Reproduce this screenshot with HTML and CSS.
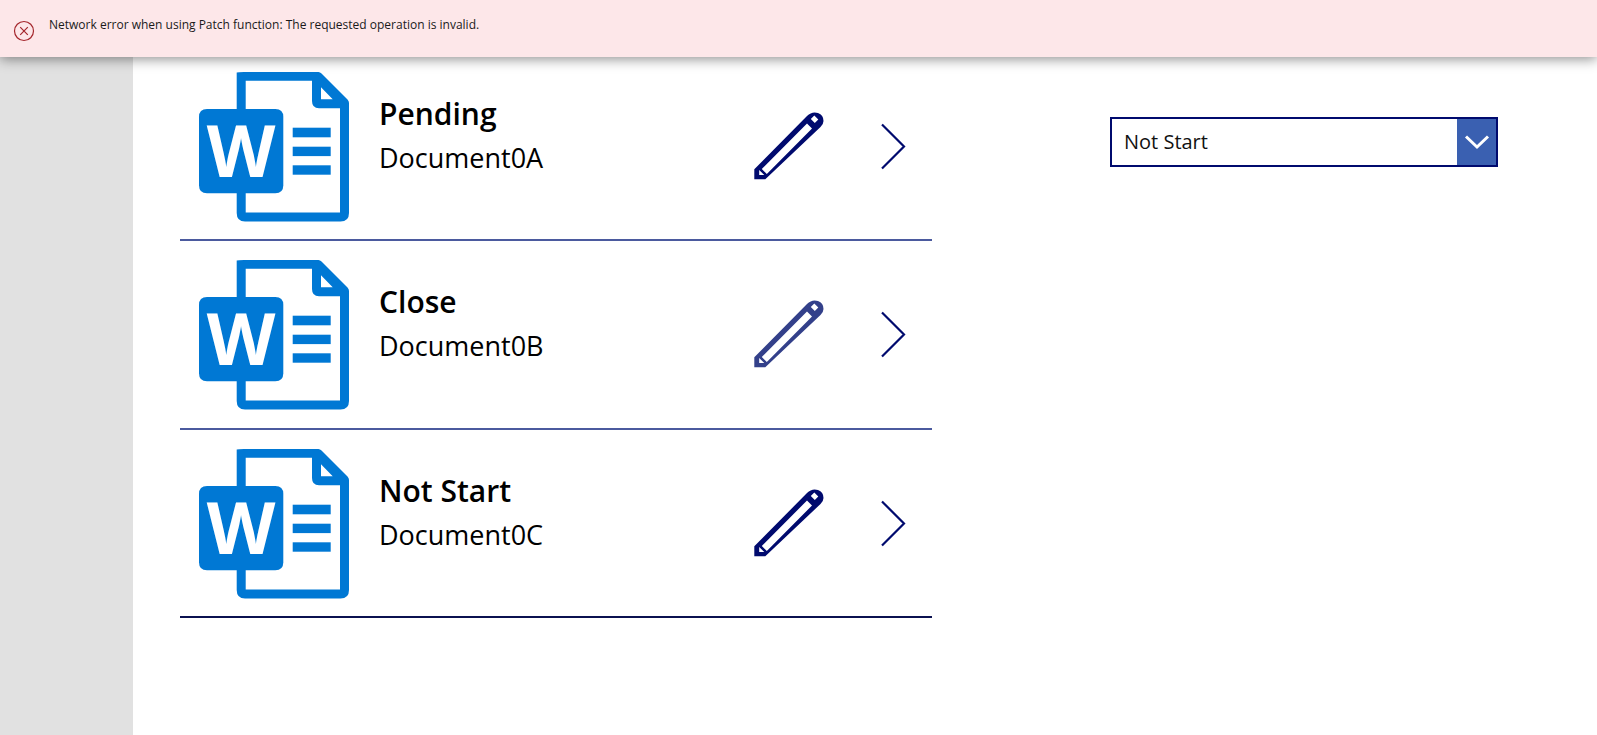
FILE: index.html
```html
<!DOCTYPE html>
<html lang="en">
<head>
<meta charset="utf-8">
<title>Documents</title>
<link rel="stylesheet" href="styles.css">
</head>
<body>
<div class="banner">
  <svg class="banner-icon" width="22" height="22" viewBox="0 0 22 22"><circle cx="11" cy="11" r="9.5"/><path d="M7.2 7.2l7.6 7.6M14.8 7.2l-7.6 7.6"/></svg>
  <span class="banner-text">Network error when using Patch function: The requested operation is invalid.</span>
</div>
<svg class="defs" width="0" height="0" aria-hidden="true">
  <defs>
    <g id="word">
      <path fill-rule="evenodd" d="M45 0H119.5Q121 0 122.500 1.500L148.500 27.500Q150 29 150 31V141Q150 149.500 141.500 149.500H46Q37.700 149.500 37.700 141V0.500Q39 0 45 0ZM46.700 8.700V140.500H141V36.300H120Q113 36.300 113 29V8.700ZM122 15.300V27.300H133.700Z"/>
      <path d="M8 37H76.300Q84.300 37 84.300 45V113.300Q84.300 121.300 76.300 121.300H8Q0 121.300 0 113.300V45Q0 37 8 37Z"/>
      <rect x="93.700" y="55.700" width="38" height="9.600"/>
      <rect x="93.700" y="74.700" width="38" height="9.400"/>
      <rect x="93.700" y="93.300" width="38" height="9.400"/>
      <text class="word-w" x="42" y="104.500" text-anchor="middle">W</text>
    </g>
    <g id="pencil">
      <path fill-rule="evenodd" d="M2.300 59.300L55 6Q60 1 66 3Q71.500 5 71.500 11Q71.500 14 68.500 17L13.300 69.300H2.300ZM13.300 55.500L9.800 59L14.800 64L18.300 60.500L60 18.500L55 13.500ZM62.300 5.500L58.800 9L62.800 13L66.300 9.500ZM7.200 60V65H12.300Z"/>
    </g>
  </defs>
</svg>
<div class="screen">
  <aside class="gutter"></aside>
  <main class="content">
    <ul class="list">
      <li class="row">
        <svg class="word" width="150" height="150" viewBox="0 0 150 150"><use href="#word"/></svg>
        <div class="texts"><div class="status">Pending</div><div class="doc">Document0A</div></div>
        <svg class="pencil" width="72" height="72" viewBox="0 0 72 72"><use href="#pencil"/></svg>
        <svg class="chevron" width="26" height="48" viewBox="0 0 26 48"><path d="M2 1.500L24 23.500L2 45.500"/></svg>
      </li>
      <li class="row row-hover">
        <svg class="word" width="150" height="150" viewBox="0 0 150 150"><use href="#word"/></svg>
        <div class="texts"><div class="status">Close</div><div class="doc">Document0B</div></div>
        <svg class="pencil" width="72" height="72" viewBox="0 0 72 72"><use href="#pencil"/></svg>
        <svg class="chevron" width="26" height="48" viewBox="0 0 26 48"><path d="M2 1.500L24 23.500L2 45.500"/></svg>
      </li>
      <li class="row row-last">
        <svg class="word" width="150" height="150" viewBox="0 0 150 150"><use href="#word"/></svg>
        <div class="texts"><div class="status">Not Start</div><div class="doc">Document0C</div></div>
        <svg class="pencil" width="72" height="72" viewBox="0 0 72 72"><use href="#pencil"/></svg>
        <svg class="chevron" width="26" height="48" viewBox="0 0 26 48"><path d="M2 1.500L24 23.500L2 45.500"/></svg>
      </li>
    </ul>
    <div class="dropdown">
      <span class="dropdown-value">Not Start</span>
      <span class="dropdown-button"><svg width="26" height="16" viewBox="0 0 26 16"><path d="M2 2.500L13 13L24 2.500"/></svg></span>
    </div>
  </main>
</div>
</body>
</html>
```
FILE: styles.css
```css
* { box-sizing: border-box; }
html, body { margin: 0; height: 100%; overflow: hidden; background: #fff; }
body { font-family: "Open Sans", "Liberation Sans", sans-serif; color: #000; position: relative; }
.defs { position: absolute; }

.banner {
  position: absolute; top: 0; left: 0; right: 0; height: 57px; z-index: 2;
  background: #fde7e9;
  box-shadow: 0 2px 12px rgba(0, 0, 0, .45);
  display: flex; align-items: flex-start; padding: 16px 0 0 13px;
}
.banner-icon { margin: 4px 0 0 0; flex: none; fill: none; stroke: #a4262c; stroke-width: 1.2; }
.banner-text { margin-left: 14px; font-size: 12px; line-height: 17px; color: #1a1a1a; }

.screen { display: flex; height: 100%; }
.gutter { width: 133px; flex: none; background: #e1e1e1; }
.content { flex: 1; display: flex; align-items: flex-start; padding: 53px 0 0 47px; }

.list { list-style: none; margin: 0; padding: 0; width: 752px; flex: none; }
.row {
  height: 188.300px; display: flex; align-items: flex-start;
  padding: 19px 0 0 19px;
  border-bottom: 2px solid #4b5a9e;
}
.row-last { border-bottom-color: #0b1150; }
.word { flex: none; fill: #0078d4; }
.word-w { font: 700 71px "Open Sans", "Liberation Sans", sans-serif; fill: #fff; }
.texts { width: 373px; flex: none; margin: 0 0 0 30px; padding-top: 19px; }
.status { font-size: 30px; font-weight: 600; line-height: 45px; }
.doc { font-size: 27px; line-height: 43px; }
.pencil { flex: none; margin-top: 38px; fill: #000a6e; }
.row-hover .pencil { fill: #33408a; }
.chevron { flex: none; margin: 51px 0 0 56px; fill: none; stroke: #000a6e; stroke-width: 2.200; }

.dropdown {
  margin: 64px 0 0 178px; width: 388px; height: 50px; flex: none;
  display: flex; align-items: stretch;
  border: 2px solid #000a6e; background: #fff;
}
.dropdown-value { flex: 1; padding-left: 12px; font-size: 20px; line-height: 46px; color: #111; }
.dropdown-button { width: 39px; background: #3a60b1; display: flex; align-items: center; justify-content: center; }
.dropdown-button svg { fill: none; stroke: #fff; stroke-width: 3; }
```
